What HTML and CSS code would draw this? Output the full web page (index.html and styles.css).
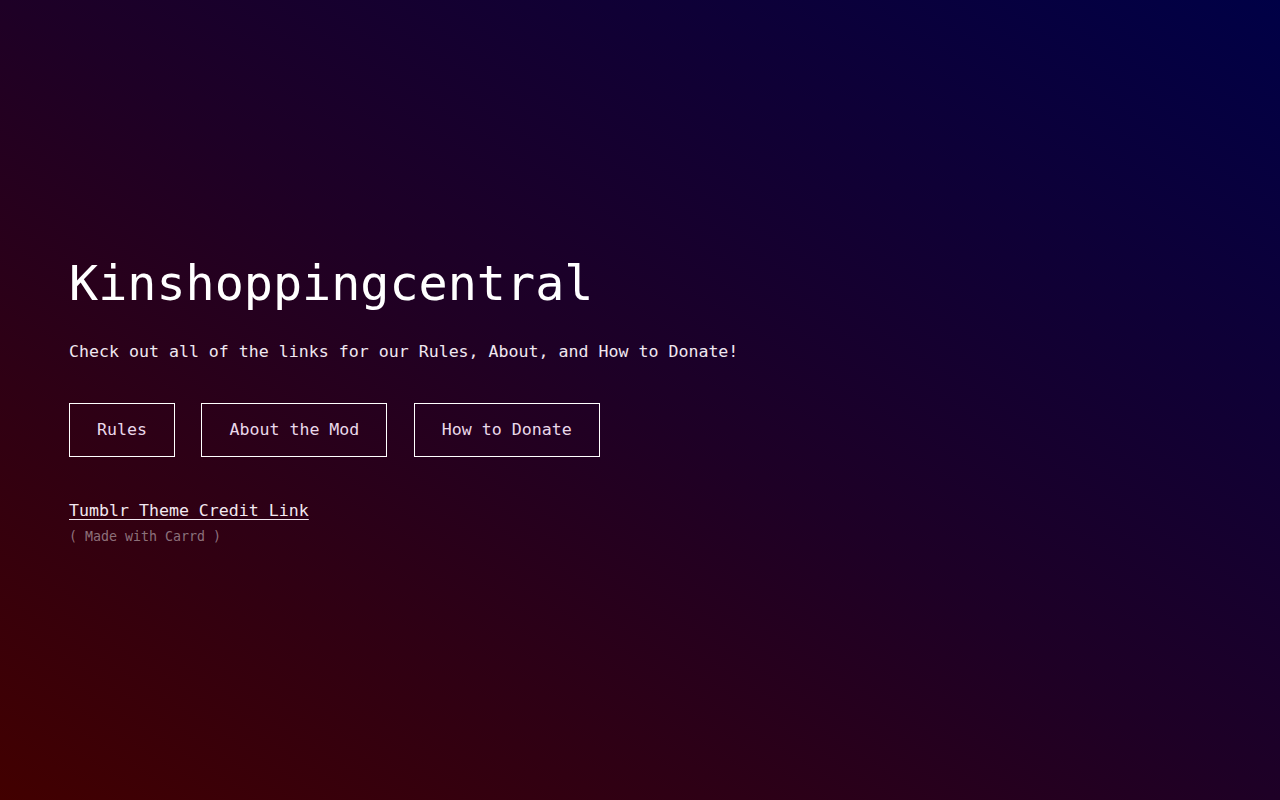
FILE: index.html
```html
<!DOCTYPE html>
<html lang="en">
<head>
<meta charset="utf-8">
<title>Kinshoppingcentral</title>
<link rel="stylesheet" href="styles.css">
</head>
<body>
<main class="page">
  <section class="content">
    <h1 class="title">Kinshoppingcentral</h1>
    <p class="intro">Check out all of the links for our Rules, About, and How to Donate!</p>
    <nav class="buttons">
      <a class="btn" href="#">Rules</a>
      <a class="btn" href="#">About the Mod</a>
      <a class="btn" href="#">How to Donate</a>
    </nav>
    <a class="credit" href="#">Tumblr Theme Credit Link</a>
    <p class="made">( Made with Carrd )</p>
  </section>
</main>
</body>
</html>
```

FILE: styles.css
```css
html, body {
  margin: 0;
  padding: 0;
  height: 100%;
}
body {
  background: linear-gradient(to top right, #420000 0%, #1e0026 50%, #000046 100%);
  font-family: "DejaVu Sans Mono", "Liberation Mono", monospace;
  color: #ffffff;
}
.page {
  min-height: 100vh;
  box-sizing: border-box;
  padding: 255px 0 0 69px;
}
.content {
  display: flex;
  flex-direction: column;
  align-items: flex-start;
}
.title {
  margin: 0;
  font-size: 48.4px;
  line-height: 57.6px;
  font-weight: 400;
  color: #ffffff;
  letter-spacing: 0;
}
.intro {
  margin: 26px 0 0;
  font-size: 16.6px;
  line-height: 25px;
  color: #f0e8f0;
}
.buttons {
  display: flex;
  gap: 26.5px;
  margin-top: 39px;
}
.btn {
  display: flex;
  align-items: center;
  justify-content: center;
  box-sizing: border-box;
  height: 54px;
  padding: 0 27px;
  border: 1px solid #ffffff;
  color: #ead8ea;
  text-decoration: none;
  font-size: 16.6px;
}
.credit {
  margin-top: 41px;
  font-size: 16.6px;
  line-height: 25px;
  color: #f2e8f0;
  text-decoration: underline;
  text-underline-offset: 3px;
}
.made {
  margin: 4px 0 0;
  font-size: 13.3px;
  line-height: 20px;
  color: rgba(255, 255, 255, 0.45);
}
```
